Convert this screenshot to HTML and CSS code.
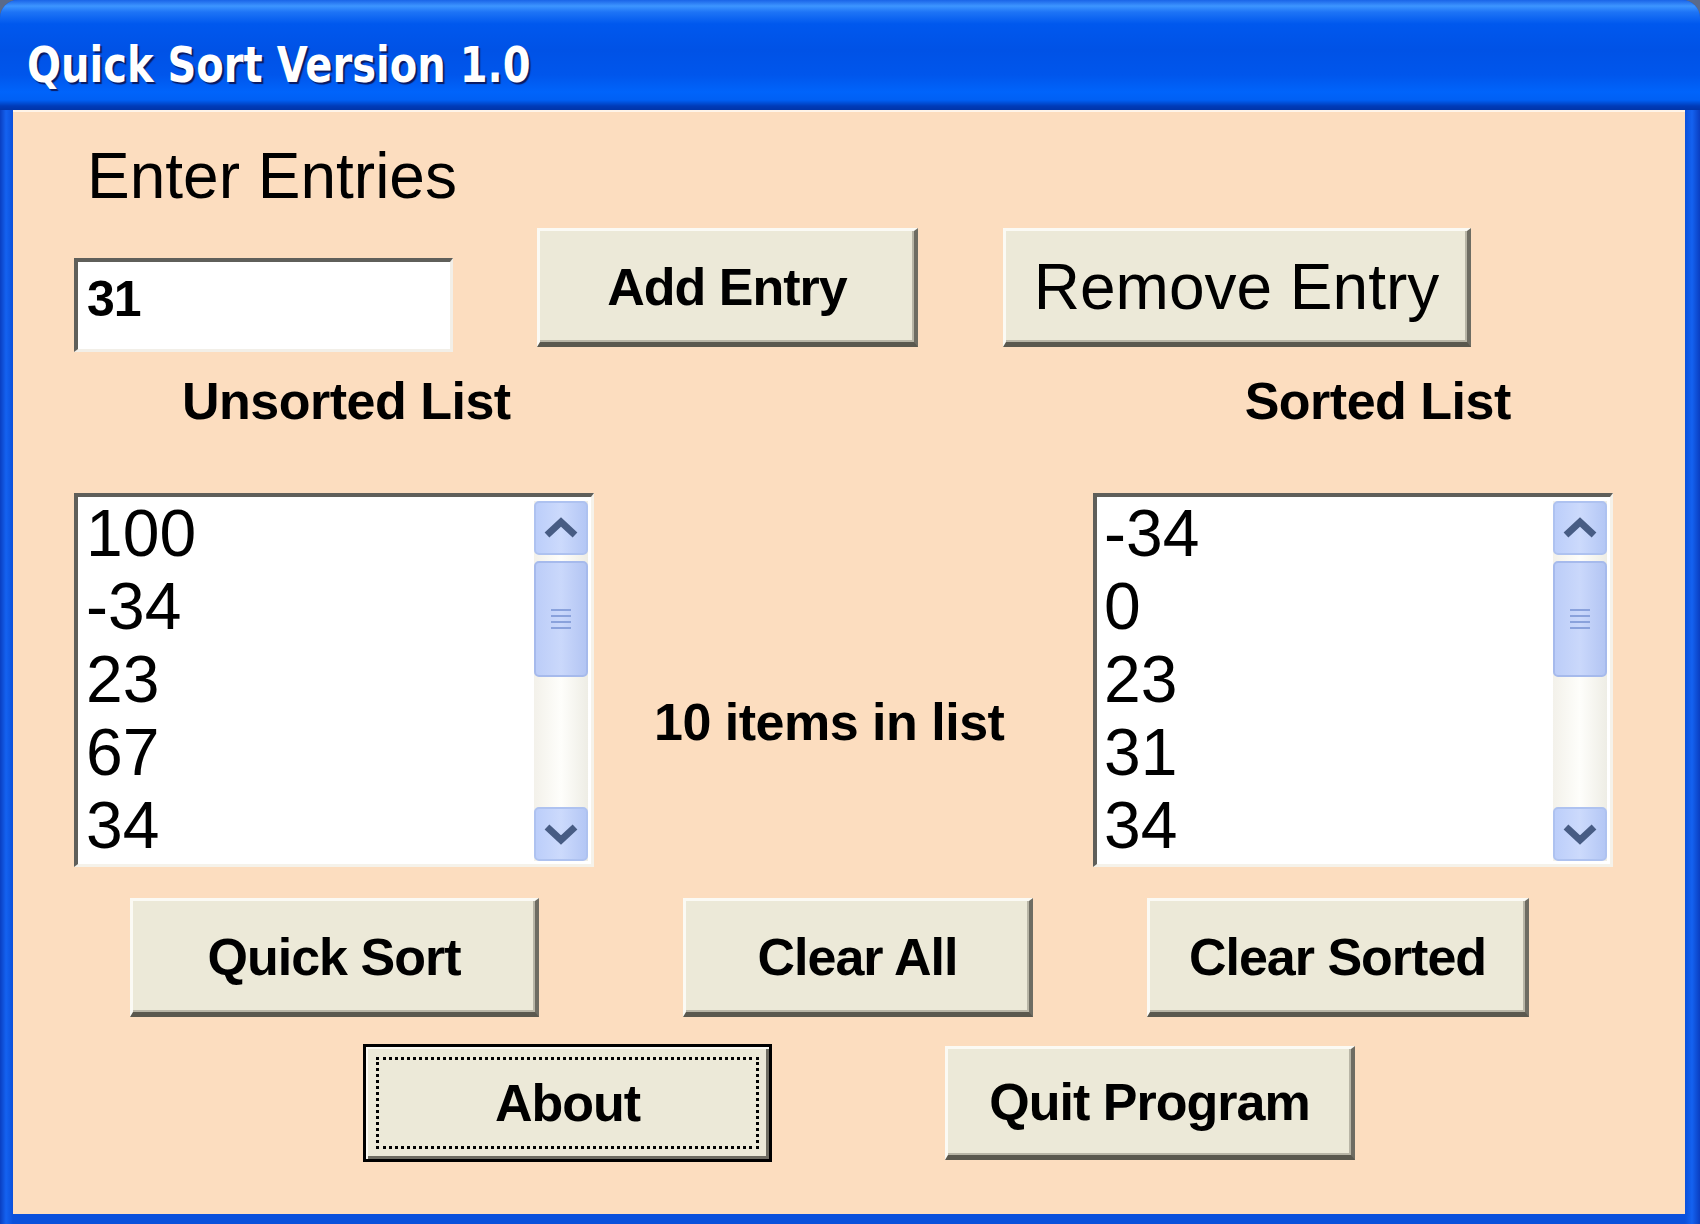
FILE: index.html
```html
<!DOCTYPE html>
<html>
<head>
<meta charset="utf-8">
<link rel="stylesheet" href="styles.css">
</head>
<body>
<div class="window">
  <div class="titlebar"><span class="title">Quick Sort Version 1.0</span></div>
  <div class="frame">
    <div class="client">
      <div class="row r1"><span class="heading">Enter Entries</span></div>
      <div class="row r2">
        <div class="textbox">31</div>
        <div class="btn btn-add">Add Entry</div>
        <div class="btn btn-remove">Remove Entry</div>
      </div>
      <div class="row r3">
        <span class="label lbl-unsorted">Unsorted List</span>
        <span class="label lbl-sorted">Sorted List</span>
      </div>
      <div class="row r4">
        <div class="listbox lb-left">
          <div class="items">
            <div>100</div><div>-34</div><div>23</div><div>67</div><div>34</div>
          </div>
          <div class="scrollbar">
            <div class="sb-btn"><svg viewBox="0 0 40 40" width="40" height="40"><path d="M6 27 L20 14 L34 27" fill="none" stroke="#475c84" stroke-width="7"/></svg></div>
            <div class="sb-thumb"><span></span><span></span><span></span><span></span></div>
            <div class="sb-track"></div>
            <div class="sb-btn"><svg viewBox="0 0 40 40" width="40" height="40"><path d="M6 13 L20 26 L34 13" fill="none" stroke="#475c84" stroke-width="7"/></svg></div>
          </div>
        </div>
        <div class="middle"><span class="label count">10 items in list</span></div>
        <div class="listbox lb-right">
          <div class="items">
            <div>-34</div><div>0</div><div>23</div><div>31</div><div>34</div>
          </div>
          <div class="scrollbar">
            <div class="sb-btn"><svg viewBox="0 0 40 40" width="40" height="40"><path d="M6 27 L20 14 L34 27" fill="none" stroke="#475c84" stroke-width="7"/></svg></div>
            <div class="sb-thumb"><span></span><span></span><span></span><span></span></div>
            <div class="sb-track"></div>
            <div class="sb-btn"><svg viewBox="0 0 40 40" width="40" height="40"><path d="M6 13 L20 26 L34 13" fill="none" stroke="#475c84" stroke-width="7"/></svg></div>
          </div>
        </div>
      </div>
      <div class="row r5">
        <div class="btn btn-quick">Quick Sort</div>
        <div class="btn btn-clearall">Clear All</div>
        <div class="btn btn-clearsorted">Clear Sorted</div>
      </div>
      <div class="row r6">
        <div class="btn btn-about"><span class="focus">About</span></div>
        <div class="btn btn-quit">Quit Program</div>
      </div>
    </div>
  </div>
</div>
</body>
</html>
```
FILE: styles.css
```css
html, body {
  margin: 0;
  padding: 0;
  background: #5a6a8a;
}
.window {
  width: 1700px;
  height: 1224px;
  display: flex;
  flex-direction: column;
  border-radius: 18px 18px 0 0;
  overflow: hidden;
  background: #0a4fd8;
}
.titlebar {
  height: 110px;
  flex: none;
  box-sizing: border-box;
  padding-left: 27px;
  padding-top: 20px;
  display: flex;
  align-items: center;
  background: linear-gradient(to bottom,
    #1a64e8 0px, #3d95ff 6px, #1e74f6 12px, #0058ee 24px,
    #0052e6 50px, #0056ec 75px, #0064fb 92px, #0060f4 100px, #003bb8 106px, #0034a8 110px);
}
.title {
  font-family: "DejaVu Sans Condensed", "DejaVu Sans", sans-serif;
  font-weight: bold;
  font-size: 50px;
  color: #ffffff;
  text-shadow: 2px 2px 1px #0a1a60;
  transform: scaleX(0.89);
  transform-origin: left center;
  white-space: nowrap;
}
.frame {
  flex: 1;
  display: flex;
  padding: 0 15px 10px 13px;
  background: linear-gradient(to right, #0a3ec0 0, #1462f0 6px, #0a50dc 13px, #0a50dc 1685px, #1462f0 1692px, #0a3ec0 1700px);
}
.client {
  flex: 1;
  background: #fcddbf;
  border-top: 2px solid #fff4e8;
  display: flex;
  flex-direction: column;
  font-family: "Liberation Sans", Arial, sans-serif;
  color: #000;
}
.row {
  display: flex;
  flex: none;
}
.r1 {
  margin-top: 32px;
  height: 64px;
  padding-left: 74px;
}
.heading {
  font-size: 64px;
  line-height: 64px;
}
.r2 {
  margin-top: 20px;
  height: 124px;
  align-items: flex-start;
  padding-left: 61px;
}
.textbox {
  margin-top: 30px;
  width: 379px;
  height: 94px;
  box-sizing: border-box;
  background: #ffffff;
  border-style: solid;
  border-width: 4px 3px 3px 4px;
  border-color: #5f5f5a #f2efe8 #f2efe8 #5f5f5a;
  font-weight: bold;
  font-size: 50px;
  line-height: 50px;
  padding: 12px 0 0 9px;
  letter-spacing: -1px;
}
.btn {
  box-sizing: border-box;
  background: #ece9d8;
  border-style: solid;
  border-width: 3px 4px 5px 3px;
  border-color: #fbfaf4 #6e6c62 #5a584e #fbfaf4;
  box-shadow: inset -2px -2px 0 #b8b5a6;
  display: flex;
  align-items: center;
  justify-content: center;
  font-weight: bold;
  font-size: 52px;
  letter-spacing: -1px;
  height: 119px;
}
.btn-add {
  width: 381px;
  margin-left: 84px;
}
.btn-remove {
  width: 468px;
  margin-left: 85px;
  font-weight: normal;
  font-size: 64px;
  letter-spacing: 0;
}
.r3 {
  margin-top: 23px;
  height: 53px;
}
.label {
  font-weight: bold;
  font-size: 52px;
  line-height: 53px;
  letter-spacing: -0.5px;
}
.lbl-unsorted {
  margin-left: 169px;
}
.lbl-sorted {
  margin-left: 734px;
}
.r4 {
  margin-top: 65px;
  height: 374px;
  padding-left: 61px;
}
.listbox {
  width: 520px;
  height: 374px;
  box-sizing: border-box;
  background: #ffffff;
  border-style: solid;
  border-width: 4px 3px 3px 4px;
  border-color: #5f5f5a #f5f2ea #f5f2ea #5f5f5a;
  display: flex;
}
.items {
  flex: 1;
  font-size: 66px;
  line-height: 73px;
  padding-left: 8px;
  overflow: hidden;
}
.lb-right .items {
  padding-left: 7px;
}
.scrollbar {
  width: 54px;
  margin: 4px 3px 3px 0;
  display: flex;
  flex-direction: column;
  background: linear-gradient(to right, #f3f1ea, #fefefb 50%, #eeede5);
}
.sb-btn {
  height: 54px;
  flex: none;
  box-sizing: border-box;
  border: 2px solid #aec2f0;
  border-radius: 5px;
  background: linear-gradient(to right, #bccefa, #ccdafc 50%, #b4c7f5);
  display: flex;
  align-items: center;
  justify-content: center;
}
.sb-thumb {
  margin-top: 6px;
  height: 116px;
  flex: none;
  box-sizing: border-box;
  border: 2px solid #a6baec;
  border-radius: 5px;
  background: linear-gradient(to right, #bccdf8, #cad8fb 50%, #b3c5f3);
  display: flex;
  flex-direction: column;
  align-items: center;
  justify-content: center;
  gap: 4px;
}
.sb-thumb span {
  display: block;
  width: 20px;
  height: 2px;
  background: #8aa2dc;
}
.sb-track {
  flex: 1;
}
.middle {
  width: 499px;
  flex: none;
  padding-left: 60px;
  box-sizing: border-box;
}
.count {
  display: block;
  margin-top: 203px;
}
.r5 {
  margin-top: 31px;
  height: 119px;
}
.btn-quick {
  width: 409px;
  margin-left: 117px;
}
.btn-clearall {
  width: 350px;
  margin-left: 144px;
}
.btn-clearsorted {
  width: 382px;
  margin-left: 114px;
}
.r6 {
  margin-top: 27px;
  height: 118px;
  align-items: flex-start;
}
.btn-about {
  width: 409px;
  height: 118px;
  margin-left: 350px;
  border: 3px solid #000;
  box-shadow: inset 2px 2px 0 #fbfaf4, inset -3px -3px 0 #6e6c62;
  padding: 10px;
}
.focus {
  flex: 1;
  align-self: stretch;
  display: flex;
  align-items: center;
  justify-content: center;
  border: 3px dotted #000;
}
.btn-quit {
  width: 410px;
  height: 114px;
  margin-top: 2px;
  margin-left: 173px;
}
```
